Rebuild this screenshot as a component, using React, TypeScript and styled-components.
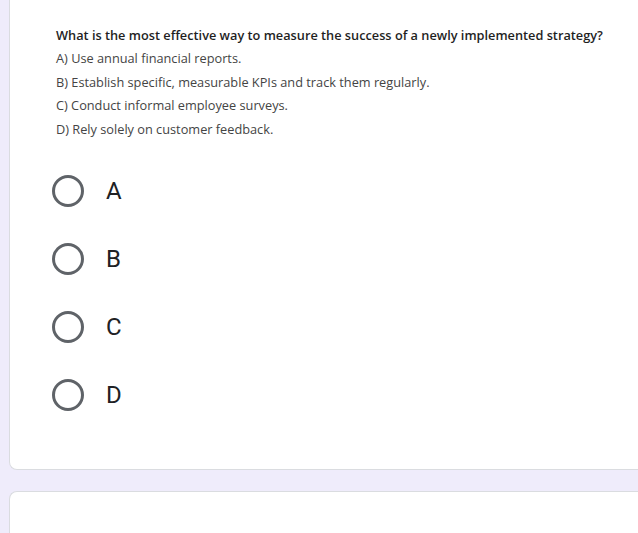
import styled, { createGlobalStyle } from "styled-components";

const GlobalStyle = createGlobalStyle`
  html, body {
    margin: 0;
    padding: 0;
    background: #efecfb;
  }
  body {
    font-family: "Open Sans", "Noto Sans", sans-serif;
  }
`;

const Page = styled.main`
  display: flex;
  flex-direction: column;
  gap: 21px;
  padding-left: 9px;
  height: 533px;
  overflow: hidden;
`;

const Card = styled.section<{ $top?: boolean }>`
  background: #fff;
  border: 1px solid #dadce0;
  border-right: none;
  border-radius: ${(p) => (p.$top ? "0 0 0 8px" : "8px 0 0 0")};
  border-top: ${(p) => (p.$top ? "none" : "1px solid #dadce0")};
  padding: ${(p) => (p.$top ? "24px 0 40px 46px" : "0")};
  min-height: ${(p) => (p.$top ? "auto" : "80px")};
  flex-shrink: 0;
`;

const Question = styled.p`
  margin: 0;
  font-size: 12.75px;
  font-weight: 600;
  line-height: 23px;
  color: #1f1f1f;
`;

const Choice = styled.p`
  margin: 0;
  font-size: 12.75px;
  line-height: 23.7px;
  color: #444;
`;

const Options = styled.div`
  display: flex;
  flex-direction: column;
  margin-top: 15px;
`;

const Row = styled.label`
  display: flex;
  align-items: center;
  height: 68px;
  gap: 22px;
  cursor: pointer;
`;

const Radio = styled.span`
  width: 26px;
  height: 26px;
  border: 3px solid #5f6368;
  border-radius: 50%;
  margin-left: -4px;
`;

const Letter = styled.span`
  font-family: Roboto, "Noto Sans", sans-serif;
  font-size: 24px;
  font-weight: 400;
  color: #202124;
`;

const choices = [
  "A) Use annual financial reports.",
  "B) Establish specific, measurable KPIs and track them regularly.",
  "C) Conduct informal employee surveys.",
  "D) Rely solely on customer feedback.",
];

export default function App() {
  return (
    <>
      <GlobalStyle />
      <Page>
        <Card $top>
          <Question>
            What is the most effective way to measure the success of a newly implemented strategy?
          </Question>
          {choices.map((c) => (
            <Choice key={c}>{c}</Choice>
          ))}
          <Options>
            {["A", "B", "C", "D"].map((l) => (
              <Row key={l}>
                <Radio />
                <Letter>{l}</Letter>
              </Row>
            ))}
          </Options>
        </Card>
        <Card />
      </Page>
    </>
  );
}
